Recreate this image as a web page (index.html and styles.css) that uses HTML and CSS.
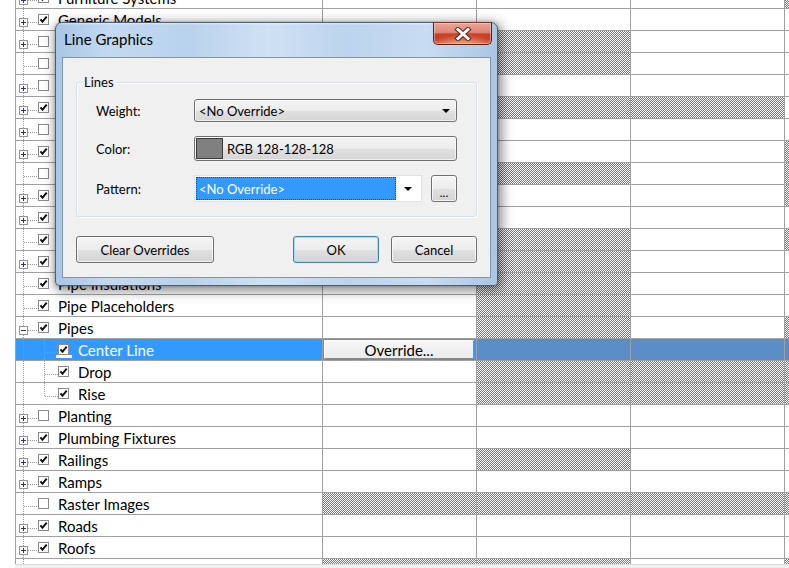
FILE: index.html
```html
<!DOCTYPE html>
<html>
<head>
<meta charset="utf-8">
<title>Visibility Overrides</title>
<link rel="stylesheet" href="styles.css">
</head>
<body>
<svg class="defs" width="0" height="0" aria-hidden="true">
  <defs>
    <symbol id="plus" viewBox="0 0 9 9"><rect x=".5" y=".5" width="8" height="8" fill="#fbfbfb" stroke="#959595"/><path d="M2 4.5H7M4.5 2V7" stroke="#2e3a4c"/></symbol>
    <symbol id="minus" viewBox="0 0 9 9"><rect x=".5" y=".5" width="8" height="8" fill="#fbfbfb" stroke="#959595"/><path d="M2 4.5H7" stroke="#2e3a4c"/></symbol>
    <symbol id="on" viewBox="0 0 11 11"><rect x=".5" y=".5" width="10" height="10" fill="#fff" stroke="#8a8a8a"/><path d="M2.4 5.3 4.5 7.7 8.7 2.6" fill="none" stroke="#111" stroke-width="1.9"/></symbol>
    <symbol id="off" viewBox="0 0 11 11"><rect x=".5" y=".5" width="10" height="10" fill="#fff" stroke="#8a8a8a"/></symbol>
  </defs>
</svg>

<div class="table">
  <div class="row"><div class="lead"></div><div class="c t"><svg class="exp"><use href="#plus"/></svg><span class="stub"></span><svg class="cb"><use href="#on"/></svg><span class="nm">Furniture Systems</span></div><div class="c"></div><div class="c"></div><div class="c"></div><div class="c x h"></div></div>
  <div class="row"><div class="lead"></div><div class="c t"><svg class="exp"><use href="#plus"/></svg><span class="stub"></span><svg class="cb"><use href="#on"/></svg><span class="nm">Generic Models</span></div><div class="c"></div><div class="c"></div><div class="c"></div><div class="c x"></div></div>
  <div class="row"><div class="lead"></div><div class="c t"><svg class="exp"><use href="#plus"/></svg><span class="stub"></span><svg class="cb"><use href="#off"/></svg><span class="nm">Lighting Devices</span></div><div class="c"></div><div class="c h"></div><div class="c"></div><div class="c x"></div></div>
  <div class="row"><div class="lead"></div><div class="c t"><span class="gap"></span><span class="stub"></span><svg class="cb"><use href="#off"/></svg><span class="nm">Lighting Fixtures</span></div><div class="c"></div><div class="c h"></div><div class="c"></div><div class="c x"></div></div>
  <div class="row"><div class="lead"></div><div class="c t"><svg class="exp"><use href="#plus"/></svg><span class="stub"></span><svg class="cb"><use href="#off"/></svg><span class="nm">Lines</span></div><div class="c"></div><div class="c"></div><div class="c"></div><div class="c x"></div></div>
  <div class="row"><div class="lead"></div><div class="c t"><svg class="exp"><use href="#plus"/></svg><span class="stub"></span><svg class="cb"><use href="#on"/></svg><span class="nm">Mass</span></div><div class="c"></div><div class="c h"></div><div class="c h"></div><div class="c x"></div></div>
  <div class="row"><div class="lead"></div><div class="c t"><svg class="exp"><use href="#plus"/></svg><span class="stub"></span><svg class="cb"><use href="#off"/></svg><span class="nm">Mechanical Equipment</span></div><div class="c"></div><div class="c"></div><div class="c"></div><div class="c x"></div></div>
  <div class="row"><div class="lead"></div><div class="c t"><svg class="exp"><use href="#plus"/></svg><span class="stub"></span><svg class="cb"><use href="#on"/></svg><span class="nm">Nurse Call Devices</span></div><div class="c"></div><div class="c"></div><div class="c"></div><div class="c x h"></div></div>
  <div class="row"><div class="lead"></div><div class="c t"><span class="gap"></span><span class="stub"></span><svg class="cb"><use href="#off"/></svg><span class="nm">Parking</span></div><div class="c"></div><div class="c h"></div><div class="c"></div><div class="c x h"></div></div>
  <div class="row"><div class="lead"></div><div class="c t"><svg class="exp"><use href="#plus"/></svg><span class="stub"></span><svg class="cb"><use href="#on"/></svg><span class="nm">Parts</span></div><div class="c"></div><div class="c"></div><div class="c"></div><div class="c x h"></div></div>
  <div class="row"><div class="lead"></div><div class="c t"><svg class="exp"><use href="#plus"/></svg><span class="stub"></span><svg class="cb"><use href="#on"/></svg><span class="nm">Pipe Accessories</span></div><div class="c"></div><div class="c"></div><div class="c"></div><div class="c x"></div></div>
  <div class="row"><div class="lead"></div><div class="c t"><span class="gap"></span><span class="stub"></span><svg class="cb"><use href="#on"/></svg><span class="nm">Pipe Fitting Insulations</span></div><div class="c"></div><div class="c h"></div><div class="c"></div><div class="c x h"></div></div>
  <div class="row"><div class="lead"></div><div class="c t"><svg class="exp"><use href="#plus"/></svg><span class="stub"></span><svg class="cb"><use href="#on"/></svg><span class="nm">Pipe Fittings</span></div><div class="c"></div><div class="c h"></div><div class="c"></div><div class="c x"></div></div>
  <div class="row"><div class="lead"></div><div class="c t"><span class="gap"></span><span class="stub"></span><svg class="cb"><use href="#on"/></svg><span class="nm">Pipe Insulations</span></div><div class="c"></div><div class="c h"></div><div class="c"></div><div class="c x"></div></div>
  <div class="row"><div class="lead"></div><div class="c t"><span class="gap"></span><span class="stub"></span><svg class="cb"><use href="#on"/></svg><span class="nm">Pipe Placeholders</span></div><div class="c"></div><div class="c h"></div><div class="c"></div><div class="c x"></div></div>
  <div class="row"><div class="lead"></div><div class="c t"><svg class="exp"><use href="#minus"/></svg><span class="stub"></span><svg class="cb"><use href="#on"/></svg><span class="nm">Pipes</span></div><div class="c"></div><div class="c h"></div><div class="c"></div><div class="c x h"></div></div>
  <div class="row sel"><div class="lead"></div><div class="c t kid"><span class="indent"></span><span class="stub long"></span><span class="cbwrap"><svg class="cb"><use href="#on"/></svg><span class="focus"></span></span><span class="nm">Center Line</span></div><div class="c blue"><button class="ovr">Override...</button></div><div class="c dark"></div><div class="c dark"></div><div class="c x dark"></div></div>
  <div class="row"><div class="lead"></div><div class="c t kid"><span class="indent"></span><span class="stub long"></span><svg class="cb"><use href="#on"/></svg><span class="nm">Drop</span></div><div class="c"></div><div class="c h"></div><div class="c h"></div><div class="c x h"></div></div>
  <div class="row"><div class="lead"></div><div class="c t kid end"><span class="indent"></span><span class="stub long"></span><svg class="cb"><use href="#on"/></svg><span class="nm">Rise</span></div><div class="c"></div><div class="c h"></div><div class="c h"></div><div class="c x h"></div></div>
  <div class="row"><div class="lead"></div><div class="c t"><svg class="exp"><use href="#plus"/></svg><span class="stub"></span><svg class="cb"><use href="#off"/></svg><span class="nm">Planting</span></div><div class="c"></div><div class="c"></div><div class="c"></div><div class="c x"></div></div>
  <div class="row"><div class="lead"></div><div class="c t"><svg class="exp"><use href="#plus"/></svg><span class="stub"></span><svg class="cb"><use href="#on"/></svg><span class="nm">Plumbing Fixtures</span></div><div class="c"></div><div class="c"></div><div class="c"></div><div class="c x"></div></div>
  <div class="row"><div class="lead"></div><div class="c t"><svg class="exp"><use href="#plus"/></svg><span class="stub"></span><svg class="cb"><use href="#on"/></svg><span class="nm">Railings</span></div><div class="c"></div><div class="c h"></div><div class="c"></div><div class="c x"></div></div>
  <div class="row"><div class="lead"></div><div class="c t"><svg class="exp"><use href="#plus"/></svg><span class="stub"></span><svg class="cb"><use href="#on"/></svg><span class="nm">Ramps</span></div><div class="c"></div><div class="c"></div><div class="c"></div><div class="c x"></div></div>
  <div class="row"><div class="lead"></div><div class="c t"><span class="gap"></span><span class="stub"></span><svg class="cb"><use href="#off"/></svg><span class="nm">Raster Images</span></div><div class="c h"></div><div class="c h"></div><div class="c h"></div><div class="c x h"></div></div>
  <div class="row"><div class="lead"></div><div class="c t"><svg class="exp"><use href="#plus"/></svg><span class="stub"></span><svg class="cb"><use href="#on"/></svg><span class="nm">Roads</span></div><div class="c"></div><div class="c"></div><div class="c"></div><div class="c x"></div></div>
  <div class="row"><div class="lead"></div><div class="c t"><svg class="exp"><use href="#plus"/></svg><span class="stub"></span><svg class="cb"><use href="#on"/></svg><span class="nm">Roofs</span></div><div class="c"></div><div class="c"></div><div class="c"></div><div class="c x"></div></div>
  <div class="row"><div class="lead"></div><div class="c t"><svg class="exp"><use href="#plus"/></svg><span class="stub"></span><svg class="cb"><use href="#on"/></svg><span class="nm">Security Devices</span></div><div class="c h"></div><div class="c h"></div><div class="c"></div><div class="c x h"></div></div>
</div>
<div class="hscroll"></div>

<div class="dlg">
  <div class="titlebar">
    <span class="title">Line Graphics</span>
    <span class="close"><svg width="18" height="14" viewBox="0 0 18 14"><path d="M4 2.5 14 11.5M14 2.5 4 11.5" stroke="#4b2a26" stroke-width="5" stroke-linecap="square"/><path d="M4 2.5 14 11.5M14 2.5 4 11.5" stroke="#fff" stroke-width="3" stroke-linecap="square"/></svg></span>
  </div>
  <div class="client">
    <div class="group">
      <span class="legend">Lines</span>
      <div class="form">
        <span class="lbl">Weight:</span>
        <div class="combo"><span>&lt;No Override&gt;</span><i class="arrow"></i></div>
        <span class="lbl">Color:</span>
        <div class="colorbtn"><span class="swatch"></span><span>RGB 128-128-128</span></div>
        <span class="lbl">Pattern:</span>
        <div class="patrow">
          <div class="pcombo"><span class="psel">&lt;No Override&gt;</span><span class="parr"><i class="arrow"></i></span></div>
          <button class="btn dots">...</button>
        </div>
      </div>
    </div>
    <div class="btnrow">
      <button class="btn clear">Clear Overrides</button>
      <button class="btn ok">OK</button>
      <button class="btn cancel">Cancel</button>
    </div>
  </div>
</div>
</body>
</html>
```

FILE: styles.css
```css
* { box-sizing: border-box; }
html, body { margin: 0; padding: 0; background: #fff; }
body {
  width: 789px;
  height: 568px;
  overflow: hidden;
  position: relative;
  font-family: Lato, "Open Sans", sans-serif;
  color: #000;
}
.defs { position: absolute; width: 0; height: 0; }

:root {
  --vdot: repeating-linear-gradient(to bottom, #9a9a9a 0 1px, transparent 1px 2px);
  --hdot: repeating-linear-gradient(to right, #9a9a9a 0 1px, transparent 1px 2px);
  --hatch: repeating-conic-gradient(#777 0 25%, #ffffff 0 50%);
}

.table { margin-top: -13px; height: 577px; overflow: hidden; }
.row { display: flex; height: 22px; }
.lead { flex: none; width: 15px; }
.c {
  flex: none;
  width: 154px;
  height: 22px;
  border-left: 1px solid #a0a0a0;
  border-bottom: 1px solid #a0a0a0;
}
.c.x { width: 30px; }
.h { background: var(--hatch) 0 0 / 2px 2px; }

.t {
  width: 307px;
  display: flex;
  align-items: flex-start;
  background-image: var(--vdot);
  background-size: 1px 100%;
  background-position: 7px 0;
  background-repeat: no-repeat;
}
.t.kid {
  background-image: var(--vdot), var(--vdot);
  background-size: 1px 100%, 1px 100%;
  background-position: 7px 0, 28px 0;
}
.t.kid.end { background-size: 1px 100%, 1px 14px; }

.exp { flex: none; width: 9px; height: 9px; margin: 9px 0 0 3px; }
.gap {
  flex: none;
  width: 12px;
  height: 1px;
  margin-top: 13px;
  padding-left: 8px;
  background: var(--hdot);
  background-clip: content-box;
  background-origin: content-box;
}
.stub { flex: none; width: 10px; height: 1px; margin-top: 13px; background: var(--hdot); }
.stub.long { width: 13px; }
.indent { flex: none; width: 29px; }
.cb { flex: none; width: 11px; height: 11px; margin-top: 5px; display: block; }
.cbwrap { flex: none; width: 11px; display: flex; flex-direction: column; align-items: flex-start; }
.focus { flex: none; width: 16px; height: 3px; margin-left: -2px; background: #fff; }
.nm {
  margin-left: 9px;
  padding-top: 1px;
  font-size: 15px;
  line-height: 21px;
  white-space: nowrap;
}

.sel .t { background-color: #3399ff; }
.sel .nm { color: #fff; }
.c.blue { background: #3399ff; }
.c.dark { background: #5b8dc8; }
.ovr {
  display: block;
  margin: 1px 0 0 1px;
  width: 150px;
  height: 19px;
  padding: 0;
  border: 1px solid;
  border-color: #fdfdfd #8c8c8c #8c8c8c #fdfdfd;
  background: linear-gradient(#f6f6f6, #ebebeb);
  font-family: Lato, "Open Sans", sans-serif;
  font-size: 15px;
  line-height: 16px;
  color: #000;
}

.hscroll { margin-left: 15px; height: 20px; background: #f0f0f0; border-top: 1px solid #dcdcdc; }

/* dialog */
.dlg {
  position: absolute;
  left: 55px;
  top: 22px;
  width: 443px;
  border: 1px solid #4f5d6e;
  border-radius: 7px 7px 4px 4px;
  padding: 0 6px 7px;
  background:
    linear-gradient(to bottom, rgba(255,255,255,.55) 0, rgba(255,255,255,0) 2px),
    linear-gradient(to right, #a8c6e6 0%, #c3d9f1 12%, #b9d2ec 30%, #cfe1f4 48%, #bcd4ee 66%, #c8dcf2 84%, #a9c6e5 100%);
  box-shadow: 2px 3px 12px 2px rgba(0,0,0,.45), 0 0 3px rgba(0,0,0,.25);
  font-family: Lato, "Open Sans", sans-serif;
}
.titlebar {
  height: 34px;
  display: flex;
  justify-content: space-between;
  align-items: flex-start;
}
.title { font-size: 15px; line-height: 34px; padding-left: 2px; margin-top: -1px; }
.close {
  margin: -1px -1px 0 0;
  width: 59px;
  height: 23px;
  border: 1px solid #5a2119;
  border-top-color: #7a3a30;
  border-radius: 0 0 5px 5px;
  background:
    radial-gradient(ellipse 60% 45% at 50% 100%, rgba(255,190,140,.75), rgba(255,190,140,0)),
    linear-gradient(#eaa597 0%, #de8574 45%, #c8432c 52%, #c23d26 78%, #d8593d 100%);
  box-shadow: inset 0 0 0 1px rgba(255,220,210,.45);
  display: flex;
  align-items: center;
  justify-content: center;
}
.close svg { display: block; }

.client {
  background: #f0f0f0;
  border: 1px solid #7f93aa;
  padding: 24px 13px 14px;
  font-size: 13px;
}
.group {
  position: relative;
  border: 1px solid #d5dfe5;
  border-radius: 3px;
  box-shadow: inset 1px 1px 0 #fff, 1px 1px 0 #fff;
  padding: 16px 19px 14px;
}
.legend {
  position: absolute;
  left: 5px;
  top: -9px;
  padding: 0 2px;
  background: #f0f0f0;
  line-height: 16px;
}
.form {
  display: grid;
  grid-template-columns: 98px 263px;
  grid-template-rows: 23px 25px 27px;
  row-gap: 14px;
  align-items: center;
}
.lbl { line-height: 16px; }
.combo, .colorbtn {
  height: 100%;
  border: 1px solid #707070;
  border-radius: 3px;
  background: linear-gradient(#f4f4f4 0%, #ececec 50%, #e0e0e0 51%, #d6d6d6 100%);
  box-shadow: inset 0 0 0 1px rgba(255,255,255,.6);
  display: flex;
  align-items: center;
}
.combo { justify-content: space-between; padding: 0 6px 0 4px; }
.arrow {
  display: block;
  width: 0;
  height: 0;
  border-left: 4px solid transparent;
  border-right: 4px solid transparent;
  border-top: 4px solid #000;
}
.colorbtn { padding: 1px; }
.swatch {
  width: 27px;
  height: 21px;
  background: #808080;
  border: 1px solid #3c3c3c;
  margin-right: 4px;
}
.patrow { height: 100%; display: flex; gap: 9px; }
.pcombo {
  width: 228px;
  height: 100%;
  background: #fff;
  border: 1px solid #e3e3e3;
  padding: 1px;
  display: flex;
}
.psel {
  flex: 1;
  background: #3399ff;
  color: #fff;
  border: 1px dotted #1b4a7a;
  display: flex;
  align-items: center;
  padding-left: 2px;
}
.parr { width: 24px; display: flex; align-items: center; justify-content: center; }
.btn {
  height: 27px;
  padding: 0;
  border: 1px solid #707070;
  border-radius: 3px;
  background: linear-gradient(#f4f4f4 0%, #ececec 50%, #e0e0e0 51%, #d4d4d4 100%);
  box-shadow: inset 0 0 0 1px rgba(255,255,255,.7);
  font-family: Lato, "Open Sans", sans-serif;
  font-size: 13px;
  color: #000;
}
.dots { width: 26px; height: 100%; font-size: 12px; line-height: 12px; padding-top: 8px; }
.btnrow { display: flex; gap: 12px; margin-top: 19px; }
.clear { width: 138px; }
.ok {
  width: 86px;
  margin-left: auto;
  border-color: #3c7fb1;
  box-shadow: inset 0 0 0 1px #a9dcf7;
}
.cancel { width: 86px; }
```
